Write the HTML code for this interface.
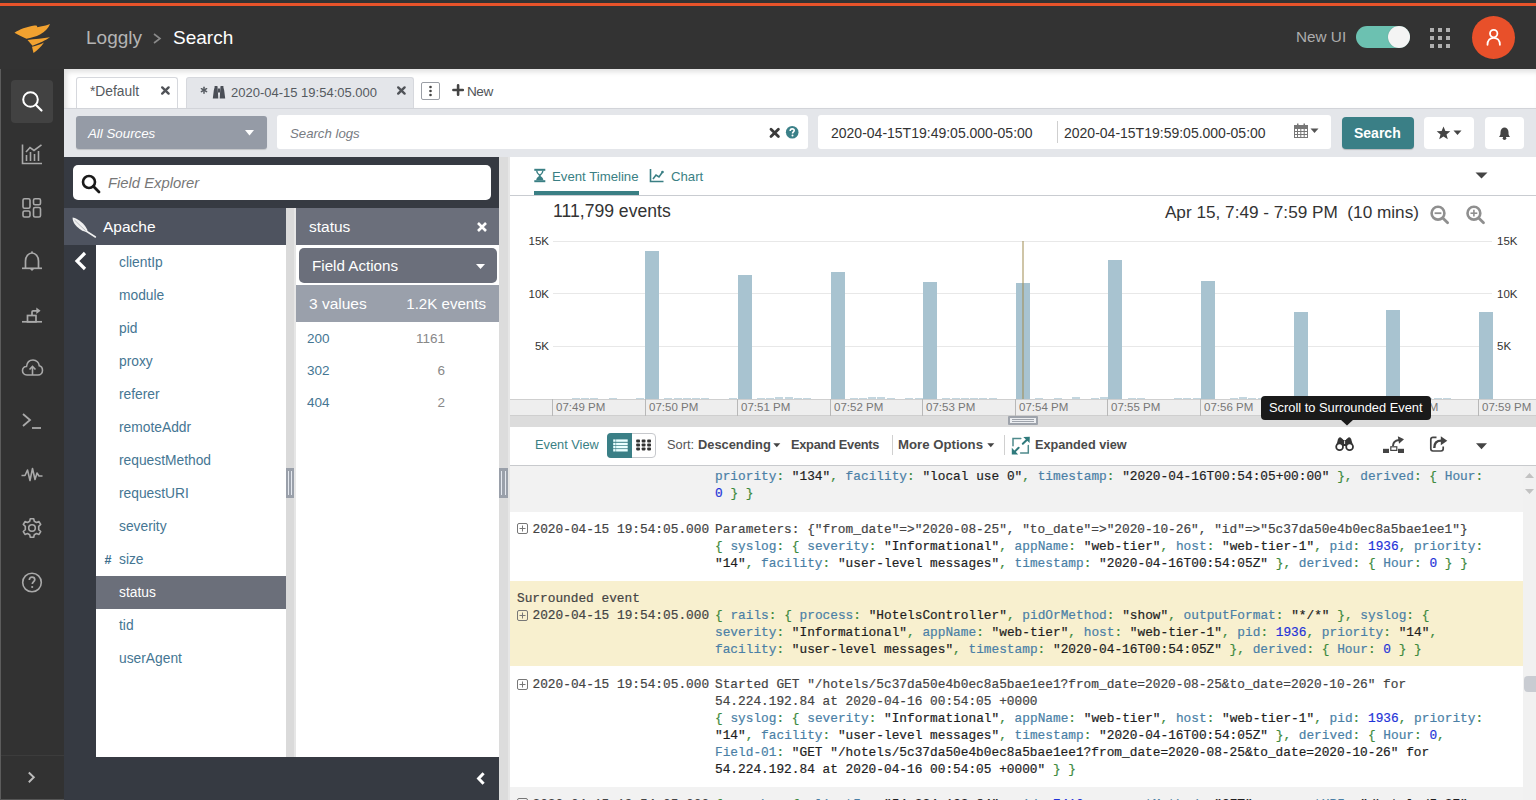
<!DOCTYPE html><html><head><meta charset="utf-8"><style>*{box-sizing:border-box;margin:0;padding:0}
html,body{width:1536px;height:800px;overflow:hidden;background:#e4e6ea;font-family:"Liberation Sans",sans-serif;position:relative}
.a{position:absolute}
.t{position:absolute;line-height:0;white-space:pre;font-family:"Liberation Sans",sans-serif}
.m{font-family:"Liberation Mono",monospace;-webkit-text-stroke:0.2px currentColor}
svg{overflow:visible}
</style></head><body><div class="a" style="left:0px;top:0px;width:1536px;height:69px;background:#333333;"></div>
<div class="a" style="left:0px;top:3px;width:1536px;height:3px;background:#e8532a;"></div>
<svg class="a" style="left:0px;top:0px;" width="64" height="69" viewBox="0 0 64 69"><g fill="#f2a230">
<path d="M14.5,32.8 C19,29.5 27,26.6 34.5,25.5 L36.5,25.6 L37.5,27.2 L40.5,26.6 C44,26 47.5,25 50,24 C48.5,28 45,32 40,34.5 C36,36.5 31,38 26.5,38.8 C22,37 18,34.5 14.5,32.8 Z"/>
<path d="M27.5,40 C35,39.2 43,38.3 50,37.3 C46,40 39,43.5 32.5,45.7 Z"/>
<path d="M32,46.8 C36,46 40,44.5 44,42.5 C41,47 37,50.5 33.5,53 Z"/>
</g></svg>
<div class="t" style="left:86px;top:38.42px;font-size:19px;color:#b4b4b4;font-weight:400;font-style:normal;">Loggly</div>
<svg class="a" style="left:150px;top:30px;" width="14" height="16" viewBox="0 0 14 16"><polyline points="4,4 10,8.5 4,13" fill="none" stroke="#8a8a8a" stroke-width="1.6"/></svg>
<div class="t" style="left:173px;top:38.42px;font-size:19px;color:#ffffff;font-weight:400;font-style:normal;">Search</div>
<div class="t" style="left:1296px;top:37.20px;font-size:15.3px;color:#adadad;font-weight:400;font-style:normal;">New UI</div>
<div class="a" style="left:1356px;top:26px;width:54px;height:22px;background:#6cc1b1;border-radius:11px"></div>
<div class="a" style="left:1388px;top:26px;width:22px;height:22px;background:#f4f4f4;border-radius:11px;box-shadow:0 0 1px rgba(0,0,0,.3)"></div>
<svg class="a" style="left:1430px;top:28px;" width="20" height="20" viewBox="0 0 20 20"><rect x="0" y="0" width="4" height="4" fill="#b0b0b0"/><rect x="8" y="0" width="4" height="4" fill="#b0b0b0"/><rect x="16" y="0" width="4" height="4" fill="#b0b0b0"/><rect x="0" y="8" width="4" height="4" fill="#b0b0b0"/><rect x="8" y="8" width="4" height="4" fill="#b0b0b0"/><rect x="16" y="8" width="4" height="4" fill="#b0b0b0"/><rect x="0" y="16" width="4" height="4" fill="#b0b0b0"/><rect x="8" y="16" width="4" height="4" fill="#b0b0b0"/><rect x="16" y="16" width="4" height="4" fill="#b0b0b0"/></svg>
<div class="a" style="left:1472px;top:16px;width:43px;height:43px;background:#e8502a;border-radius:50%"></div>
<svg class="a" style="left:1472px;top:16px;" width="43" height="43" viewBox="0 0 43 43"><circle cx="21.7" cy="17.6" r="3.7" fill="none" stroke="#fff" stroke-width="1.8"/><path d="M15.5,28.8 C15.5,24.5 18,21.8 21.7,21.8 C25.4,21.8 27.9,24.5 27.9,28.8" fill="none" stroke="#fff" stroke-width="1.8" stroke-linecap="round"/></svg>
<div class="a" style="left:0px;top:69px;width:64px;height:731px;background:#323232;"></div>
<div class="a" style="left:0px;top:69px;width:1px;height:731px;background:#5c5c5c;"></div>
<div class="a" style="left:0px;top:799px;width:64px;height:1px;background:#555555;"></div>
<div class="a" style="left:11px;top:80px;width:42px;height:43px;background:#424242;border-radius:4px"></div>
<svg class="a" style="left:20px;top:89px;" width="24" height="24" viewBox="0 0 24 24"><circle cx="10.5" cy="10.5" r="7.3" fill="none" stroke="#fff" stroke-width="2"/><line x1="16" y1="16" x2="21.5" y2="21.5" stroke="#fff" stroke-width="2.2" stroke-linecap="round"/></svg>
<svg class="a" style="left:20px;top:143px;" width="24" height="24" viewBox="0 0 24 24"><g fill="none" stroke="#a9a9a9" stroke-width="1.6"><polyline points="2.5,1.5 2.5,20.5 22,20.5"/><polyline points="6,9 10,4.5 14,7.5 21.5,1.8"/><line x1="6.5" y1="12" x2="6.5" y2="18"/><line x1="10.5" y1="9" x2="10.5" y2="18"/><line x1="14.5" y1="11" x2="14.5" y2="18"/><line x1="18.5" y1="8" x2="18.5" y2="18"/></g></svg>
<svg class="a" style="left:20px;top:196px;" width="24" height="24" viewBox="0 0 24 24"><g fill="none" stroke="#a9a9a9" stroke-width="1.6"><rect x="3" y="2.8" width="7" height="9.5" rx="1.5"/><rect x="3" y="15" width="7" height="6" rx="1.5"/><rect x="13.5" y="2.8" width="7" height="6" rx="1.5"/><rect x="13.5" y="11.5" width="7" height="9.5" rx="1.5"/></g></svg>
<svg class="a" style="left:20px;top:250px;" width="24" height="24" viewBox="0 0 24 24"><g fill="none" stroke="#a9a9a9" stroke-width="1.7"><path d="M5.5,18 L5.5,11 C5.5,6.5 8.5,3 12,3 C15.5,3 18.5,6.5 18.5,11 L18.5,18"/><line x1="2" y1="18.3" x2="22" y2="18.3"/></g><path d="M10,19 L14,19 L12,21 Z" fill="#a9a9a9"/><circle cx="12" cy="2.3" r="1" fill="#a9a9a9"/></svg>
<svg class="a" style="left:20px;top:304px;" width="24" height="24" viewBox="0 0 24 24"><g fill="none" stroke="#a9a9a9" stroke-width="1.7"><line x1="2" y1="17.8" x2="22" y2="17.8"/><rect x="7.5" y="11.5" width="8.5" height="6.3"/><path d="M12,11.5 L12,8 Q12,6.8 13.2,6.8 L17,6.8"/></g><path d="M16.3,3.6 L20.6,6.8 L16.3,10 Z" fill="#a9a9a9"/></svg>
<svg class="a" style="left:20px;top:356px;" width="24" height="24" viewBox="0 0 24 24"><g fill="none" stroke="#a9a9a9" stroke-width="1.6"><path d="M7,19 C3.8,19 2.5,16.5 2.5,14.5 C2.5,12 4.5,10.3 6.5,10.5 C7,6.5 9.5,4 13,4 C16.5,4 19,6.8 19.3,9.8 C21.5,10.3 22.5,12.3 22.5,14.5 C22.5,17 20.5,19 18,19 Z"/><line x1="12.5" y1="19" x2="12.5" y2="11"/><polyline points="9.5,13.5 12.5,10.5 15.5,13.5"/></g></svg>
<svg class="a" style="left:20px;top:409px;" width="24" height="24" viewBox="0 0 24 24"><g fill="none" stroke="#a9a9a9" stroke-width="1.8"><polyline points="3,5 10,11 3,17"/><line x1="12" y1="19" x2="21" y2="19"/></g></svg>
<svg class="a" style="left:20px;top:463px;" width="24" height="24" viewBox="0 0 24 24"><polyline points="1.5,12.5 5,12.5 7.5,7 10,17.5 12.5,5.5 15,16.5 17,10 19,13 22.5,13" fill="none" stroke="#a9a9a9" stroke-width="1.6" stroke-linejoin="round"/></svg>
<svg class="a" style="left:20px;top:516px;" width="24" height="24" viewBox="0 0 24 24"><g fill="none" stroke="#a9a9a9" stroke-width="1.6"><path d="M10.3,2.7 L13.7,2.7 L14.3,5.3 L16.5,6.5 L19,5.6 L20.7,8.5 L18.7,10.3 L18.7,13.7 L20.7,15.5 L19,18.4 L16.5,17.5 L14.3,18.7 L13.7,21.3 L10.3,21.3 L9.7,18.7 L7.5,17.5 L5,18.4 L3.3,15.5 L5.3,13.7 L5.3,10.3 L3.3,8.5 L5,5.6 L7.5,6.5 L9.7,5.3 Z" stroke-linejoin="round"/><circle cx="12" cy="12" r="3.3"/></g></svg>
<svg class="a" style="left:20px;top:570px;" width="24" height="24" viewBox="0 0 24 24"><circle cx="12" cy="12.5" r="9.3" fill="none" stroke="#a9a9a9" stroke-width="1.6"/><path d="M9.3,10 C9.3,8 10.5,7.2 12,7.2 C13.6,7.2 14.8,8.2 14.8,9.7 C14.8,11.5 12.3,11.8 12.3,14" fill="none" stroke="#a9a9a9" stroke-width="1.7"/><circle cx="12.2" cy="17" r="1.1" fill="#a9a9a9"/></svg>
<div class="a" style="left:1px;top:755px;width:63px;height:1px;background:#3c3c3c;"></div>
<svg class="a" style="left:20px;top:765px;" width="24" height="24" viewBox="0 0 24 24"><polyline points="8.8,7.5 13.8,12.3 8.8,17.2" fill="none" stroke="#bdbdbd" stroke-width="1.9"/></svg>
<div class="a" style="left:64px;top:69px;width:1472px;height:39px;background:#ffffff;box-shadow:inset 3px 3px 5px rgba(0,0,0,.12)"></div>
<div class="a" style="left:76px;top:77px;width:102px;height:31px;background:#ffffff;border:1px solid #d6d8dd;border-bottom:none;border-radius:3px 3px 0 0"></div>
<div class="t" style="left:90px;top:92.22px;font-size:13.8px;color:#555a60;font-weight:400;font-style:normal;">*Default</div>
<svg class="a" style="left:160px;top:85px;" width="12" height="12" viewBox="0 0 12 12"><path d="M2.2,2.4 L8.6,8.6 M8.6,2.4 L2.2,8.6" stroke="#505358" stroke-width="2.4" stroke-linecap="round"/></svg>
<div class="a" style="left:186px;top:77px;width:228px;height:31px;background:#e4e6ea;border:1px solid #d6d8dd;border-bottom:none;border-radius:3px 3px 0 0"></div>
<svg class="a" style="left:200px;top:86px;" width="9" height="9" viewBox="0 0 9 9"><g stroke="#555a60" stroke-width="1.5" stroke-linecap="round"><line x1="4" y1="1.2" x2="4" y2="7.2"/><line x1="1.4" y1="2.7" x2="6.6" y2="5.7"/><line x1="1.4" y1="5.7" x2="6.6" y2="2.7"/></g></svg>
<svg class="a" style="left:212px;top:85px;" width="14" height="14" viewBox="0 0 14 14"><g fill="#4a4e56"><path d="M0.8,13.6 L1.8,5.5 L2.6,2.2 L2.6,1 L5.4,1 L5.6,2.2 L6.3,13.6 Z"/><path d="M13.2,13.6 L12.2,5.5 L11.4,2.2 L11.4,1 L8.6,1 L8.4,2.2 L7.7,13.6 Z"/><rect x="6" y="3.5" width="2" height="4"/></g></svg>
<div class="t" style="left:231px;top:92.50px;font-size:13px;color:#555a60;font-weight:400;font-style:normal;">2020-04-15 19:54:05.000</div>
<svg class="a" style="left:396px;top:85px;" width="12" height="12" viewBox="0 0 12 12"><path d="M2.2,2.4 L8.6,8.6 M8.6,2.4 L2.2,8.6" stroke="#505358" stroke-width="2.4" stroke-linecap="round"/></svg>
<div class="a" style="left:421px;top:82px;width:19px;height:18px;background:#ffffff;border:1px solid #9a9ea5;border-radius:2px"></div>
<svg class="a" style="left:421px;top:82px;" width="19" height="18" viewBox="0 0 19 18"><g fill="#444"><circle cx="9.5" cy="5" r="1.3"/><circle cx="9.5" cy="9" r="1.3"/><circle cx="9.5" cy="13" r="1.3"/></g></svg>
<svg class="a" style="left:452px;top:84px;" width="14" height="14" viewBox="0 0 14 14"><path d="M6.1,1.3 L6.1,10.7 M1.4,6 L10.8,6" stroke="#444" stroke-width="2.6" stroke-linecap="round"/></svg>
<div class="t" style="left:467px;top:91.79px;font-size:13.6px;color:#505458;font-weight:400;font-style:normal;letter-spacing:-0.45px">New</div>
<div class="a" style="left:64px;top:108px;width:1472px;height:49px;background:#e4e6ea;"></div>
<div class="a" style="left:64px;top:108px;width:1472px;height:1px;background:#d2d4d9;"></div>
<div class="a" style="left:76px;top:116px;width:191px;height:33px;background:#959ba6;border-radius:3px;box-shadow:0 1px 1px rgba(0,0,0,.15)"></div>
<div class="t" style="left:88px;top:133.89px;font-size:13.3px;color:#ffffff;font-weight:400;font-style:italic;">All Sources</div>
<svg class="a" style="left:244px;top:129px;" width="12" height="8" viewBox="0 0 12 8"><path d="M1,1 L10,1 L5.5,6.5 Z" fill="#fff"/></svg>
<div class="a" style="left:277px;top:115px;width:531px;height:34px;background:#ffffff;border-radius:3px"></div>
<div class="t" style="left:290px;top:133.93px;font-size:13.2px;color:#777b82;font-weight:400;font-style:italic;">Search logs</div>
<svg class="a" style="left:768px;top:126px;" width="14" height="14" viewBox="0 0 14 14"><path d="M3,3.2 L10.4,10.6 M10.4,3.2 L3,10.6" stroke="#3a3a3a" stroke-width="2.8" stroke-linecap="round"/></svg>
<svg class="a" style="left:784px;top:124px;" width="16" height="16" viewBox="0 0 16 16"><circle cx="8.2" cy="8.3" r="6.3" fill="#3b8088"/><path d="M6.2,7 C6.2,5.6 7,4.9 8.2,4.9 C9.4,4.9 10.2,5.6 10.2,6.6 C10.2,7.9 8.5,8 8.5,9.5" fill="none" stroke="#fff" stroke-width="1.6"/><circle cx="8.5" cy="11.4" r="1" fill="#fff"/></svg>
<div class="a" style="left:818px;top:115px;width:513px;height:34px;background:#ffffff;border-radius:3px"></div>
<div class="t" style="left:831px;top:132.65px;font-size:14px;color:#333333;font-weight:400;font-style:normal;">2020-04-15T19:49:05.000-05:00</div>
<div class="a" style="left:1057px;top:121px;width:1px;height:22px;background:#cfcfcf;"></div>
<div class="t" style="left:1064px;top:132.65px;font-size:14px;color:#333333;font-weight:400;font-style:normal;">2020-04-15T19:59:05.000-05:00</div>
<svg class="a" style="left:1293px;top:123px;" width="16" height="16" viewBox="0 0 16 16"><g fill="none" stroke="#777" stroke-width="1"><rect x="1.5" y="2.5" width="13" height="12"/><line x1="1.5" y1="5.5" x2="14.5" y2="5.5"/><line x1="4.5" y1="5.5" x2="4.5" y2="14.5"/><line x1="7.8" y1="5.5" x2="7.8" y2="14.5"/><line x1="11.2" y1="5.5" x2="11.2" y2="14.5"/><line x1="1.5" y1="8.5" x2="14.5" y2="8.5"/><line x1="1.5" y1="11.5" x2="14.5" y2="11.5"/></g><rect x="1" y="2" width="14" height="3.5" fill="#777"/><rect x="4" y="0.5" width="1.5" height="3" fill="#777"/><rect x="10.5" y="0.5" width="1.5" height="3" fill="#777"/></svg>
<svg class="a" style="left:1310px;top:128px;" width="10" height="6" viewBox="0 0 10 6"><path d="M0.5,0.5 L8.5,0.5 L4.5,5 Z" fill="#555"/></svg>
<div class="a" style="left:1342px;top:117px;width:72px;height:32px;background:#3a7f86;border-radius:4px;box-shadow:0 1px 1px rgba(0,0,0,.2)"></div>
<div class="t" style="left:1354px;top:133.15px;font-size:14px;color:#ffffff;font-weight:700;font-style:normal;">Search</div>
<div class="a" style="left:1424px;top:117px;width:50px;height:32px;background:#ffffff;border-radius:4px"></div>
<svg class="a" style="left:1436px;top:126px;" width="16" height="14" viewBox="0 0 16 14"><path d="M7.5,0.5 L9.4,5 L14.3,5.3 L10.5,8.4 L11.8,13.2 L7.5,10.5 L3.2,13.2 L4.5,8.4 L0.7,5.3 L5.6,5 Z" fill="#444"/></svg>
<svg class="a" style="left:1453px;top:130px;" width="10" height="6" viewBox="0 0 10 6"><path d="M0.5,0.5 L8.5,0.5 L4.5,5 Z" fill="#444"/></svg>
<div class="a" style="left:1485px;top:117px;width:39px;height:32px;background:#ffffff;border-radius:4px"></div>
<svg class="a" style="left:1497px;top:126px;" width="16" height="15" viewBox="0 0 16 15"><path d="M2,11 C3.5,9.5 3.5,8 3.5,6 C3.5,3.3 5.5,1.5 7.5,1.5 C9.5,1.5 11.5,3.3 11.5,6 C11.5,8 11.5,9.5 13,11 Z" fill="#444"/><circle cx="7.5" cy="12.3" r="1.8" fill="#444"/></svg>
<div class="a" style="left:64px;top:157px;width:435px;height:643px;background:#363a42;"></div>
<div class="a" style="left:73px;top:165px;width:418px;height:35px;background:#ffffff;border-radius:5px"></div>
<svg class="a" style="left:81px;top:174px;" width="20" height="20" viewBox="0 0 20 20"><circle cx="8" cy="8" r="6" fill="none" stroke="#1a1a1a" stroke-width="2.6"/><line x1="12.3" y1="12.3" x2="18" y2="18" stroke="#1a1a1a" stroke-width="2.8" stroke-linecap="round"/></svg>
<div class="t" style="left:108px;top:182.87px;font-size:14.8px;color:#777777;font-weight:400;font-style:italic;">Field Explorer</div>
<div class="a" style="left:64px;top:208px;width:222px;height:37px;background:#4e535f;"></div>
<svg class="a" style="left:70px;top:215px;" width="28" height="24" viewBox="0 0 28 24"><path d="M2.6,2.6 C8.5,3.8 14,8.5 17,14.3 L17.6,16.6 L15.5,16.8 C11,15.8 7.2,12.6 4.6,9 C3.2,7 2.6,4.8 2.6,2.6 Z" fill="#f0f0f0"/><path d="M4.5,5 C8.5,9 12,12.5 16,16" fill="none" stroke="#9ea2aa" stroke-width="0.7"/><path d="M16,16 L25.4,22" stroke="#f0f0f0" stroke-width="1.5" stroke-linecap="round"/></svg>
<div class="t" style="left:103px;top:226.93px;font-size:15.5px;color:#ffffff;font-weight:400;font-style:normal;">Apache</div>
<div class="a" style="left:96px;top:245px;width:190px;height:512px;background:#ffffff;"></div>
<svg class="a" style="left:72px;top:250px;" width="18" height="22" viewBox="0 0 18 22"><polyline points="13,3 5,11 13,19" fill="none" stroke="#ffffff" stroke-width="3.2"/></svg>
<div class="t" style="left:119px;top:262.62px;font-size:13.8px;color:#457693;font-weight:400;font-style:normal;">clientIp</div>
<div class="t" style="left:119px;top:295.62px;font-size:13.8px;color:#457693;font-weight:400;font-style:normal;">module</div>
<div class="t" style="left:119px;top:328.62px;font-size:13.8px;color:#457693;font-weight:400;font-style:normal;">pid</div>
<div class="t" style="left:119px;top:361.62px;font-size:13.8px;color:#457693;font-weight:400;font-style:normal;">proxy</div>
<div class="t" style="left:119px;top:394.62px;font-size:13.8px;color:#457693;font-weight:400;font-style:normal;">referer</div>
<div class="t" style="left:119px;top:427.62px;font-size:13.8px;color:#457693;font-weight:400;font-style:normal;">remoteAddr</div>
<div class="t" style="left:119px;top:460.62px;font-size:13.8px;color:#457693;font-weight:400;font-style:normal;">requestMethod</div>
<div class="t" style="left:119px;top:493.62px;font-size:13.8px;color:#457693;font-weight:400;font-style:normal;">requestURI</div>
<div class="t" style="left:119px;top:526.62px;font-size:13.8px;color:#457693;font-weight:400;font-style:normal;">severity</div>
<div class="t" style="left:119px;top:559.62px;font-size:13.8px;color:#457693;font-weight:400;font-style:normal;">size</div>
<div class="t" style="left:104.5px;top:560.07px;font-size:12.5px;color:#3d6e8c;font-weight:700;font-style:normal;">#</div>
<div class="a" style="left:96px;top:576px;width:190px;height:33px;background:#6b6f7a;"></div>
<div class="t" style="left:119px;top:592.62px;font-size:13.8px;color:#ffffff;font-weight:400;font-style:normal;">status</div>
<div class="t" style="left:119px;top:625.62px;font-size:13.8px;color:#457693;font-weight:400;font-style:normal;">tid</div>
<div class="t" style="left:119px;top:658.62px;font-size:13.8px;color:#457693;font-weight:400;font-style:normal;">userAgent</div>
<div class="a" style="left:286px;top:208px;width:10px;height:549px;background:#dadada;"></div>
<div class="a" style="left:294px;top:208px;width:3px;height:549px;background:#e6e6e6;"></div>
<div class="a" style="left:286px;top:468px;width:8px;height:30px;background:#9aa0aa;"></div>
<div class="a" style="left:288px;top:471px;width:1.3px;height:24px;background:#e4e8ef;"></div>
<div class="a" style="left:291.2px;top:471px;width:1.3px;height:24px;background:#e4e8ef;"></div>
<div class="a" style="left:296px;top:208px;width:203px;height:549px;background:#ffffff;"></div>
<div class="a" style="left:296px;top:208px;width:203px;height:37px;background:#6b6f7b;"></div>
<div class="t" style="left:309px;top:227.43px;font-size:15.5px;color:#ffffff;font-weight:400;font-style:normal;">status</div>
<svg class="a" style="left:475px;top:220px;" width="14" height="14" viewBox="0 0 14 14"><path d="M3,3 L11,11 M11,3 L3,11" stroke="#fff" stroke-width="2.6"/></svg>
<div class="a" style="left:299px;top:248px;width:198px;height:35px;background:#6b6f7b;border-radius:5px"></div>
<div class="t" style="left:312px;top:265.73px;font-size:15.2px;color:#ffffff;font-weight:400;font-style:normal;">Field Actions</div>
<svg class="a" style="left:475px;top:263px;" width="12" height="8" viewBox="0 0 12 8"><path d="M1,1 L10,1 L5.5,6 Z" fill="#fff"/></svg>
<div class="a" style="left:296px;top:285px;width:203px;height:37px;background:#9aa0ab;"></div>
<div class="t" style="left:309px;top:304.13px;font-size:15.5px;color:#ffffff;font-weight:400;font-style:normal;">3 values</div>
<div class="t" style="left:486px;top:304.27px;font-size:15.1px;color:#ffffff;font-weight:400;font-style:normal;transform:translateX(-100%)">1.2K events</div>
<div class="t" style="left:307px;top:338.82px;font-size:13.5px;color:#457693;font-weight:400;font-style:normal;">200</div>
<div class="t" style="left:445px;top:338.82px;font-size:13.5px;color:#888888;font-weight:400;font-style:normal;transform:translateX(-100%)">1161</div>
<div class="t" style="left:307px;top:370.82px;font-size:13.5px;color:#457693;font-weight:400;font-style:normal;">302</div>
<div class="t" style="left:445px;top:370.82px;font-size:13.5px;color:#888888;font-weight:400;font-style:normal;transform:translateX(-100%)">6</div>
<div class="t" style="left:307px;top:402.82px;font-size:13.5px;color:#457693;font-weight:400;font-style:normal;">404</div>
<div class="t" style="left:445px;top:402.82px;font-size:13.5px;color:#888888;font-weight:400;font-style:normal;transform:translateX(-100%)">2</div>
<div class="a" style="left:499px;top:157px;width:11px;height:643px;background:#dcdcdc;"></div>
<div class="a" style="left:508px;top:157px;width:2px;height:643px;background:#e6e6e6;"></div>
<div class="a" style="left:499px;top:468px;width:9px;height:30px;background:#9aa0aa;"></div>
<div class="a" style="left:501.2px;top:471px;width:1.3px;height:24px;background:#e4e8ef;"></div>
<div class="a" style="left:504.6px;top:471px;width:1.3px;height:24px;background:#e4e8ef;"></div>
<div class="a" style="left:64px;top:757px;width:435px;height:43px;background:#363a42;"></div>
<svg class="a" style="left:470px;top:768px;" width="20" height="20" viewBox="0 0 20 20"><polyline points="13.6,5.2 8.6,10.5 13.6,15.8" fill="none" stroke="#ffffff" stroke-width="3"/></svg>
<div class="a" style="left:510px;top:157px;width:1026px;height:270px;background:#ffffff;"></div>
<svg class="a" style="left:534px;top:168px;" width="14" height="15" viewBox="0 0 14 15"><g fill="#3a7f84"><rect x="0.3" y="0.8" width="11" height="2"/><rect x="0.3" y="12.2" width="11" height="2"/><path d="M2.2,12.2 C2.2,10 4,8.8 5.8,7.5 C7.6,8.8 9.4,10 9.4,12.2 Z"/></g><path d="M2.6,2.6 C2.6,5 4.3,6.3 5.8,7.5 C7.3,6.3 9,5 9,2.6" fill="none" stroke="#3a7f84" stroke-width="1.4"/></svg>
<div class="t" style="left:552px;top:176.73px;font-size:13.2px;color:#3a7f84;font-weight:400;font-style:normal;">Event Timeline</div>
<svg class="a" style="left:649px;top:168px;" width="16" height="15" viewBox="0 0 16 15"><g fill="none" stroke="#3a7f84" stroke-width="1.6"><polyline points="1.5,1 1.5,13.5 14.5,13.5"/><polyline points="4,11 7,7 10,9 13.5,4"/></g><circle cx="13.5" cy="4" r="1.3" fill="#3a7f84"/></svg>
<div class="t" style="left:671px;top:176.73px;font-size:13.2px;color:#3a7f84;font-weight:400;font-style:normal;">Chart</div>
<div class="a" style="left:534px;top:191px;width:105px;height:4px;background:#3a7f84;"></div>
<div class="a" style="left:510px;top:195px;width:1026px;height:1px;background:#c9ccd1;"></div>
<svg class="a" style="left:1475px;top:172px;" width="14" height="8" viewBox="0 0 14 8"><path d="M0.5,0.5 L12.5,0.5 L6.5,6.5 Z" fill="#444"/></svg>
<div class="t" style="left:553px;top:211.40px;font-size:17.6px;color:#333333;font-weight:400;font-style:normal;">111,799 events</div>
<div class="t" style="left:1419px;top:211.54px;font-size:17.2px;color:#333333;font-weight:400;font-style:normal;transform:translateX(-100%)">Apr 15, 7:49 - 7:59 PM  (10 mins)</div>
<svg class="a" style="left:1428px;top:203px;" width="22" height="22" viewBox="0 0 22 22"><circle cx="10" cy="10.2" r="6.4" fill="none" stroke="#8f8f8f" stroke-width="2.6"/><line x1="14.8" y1="15" x2="19.6" y2="19.8" stroke="#8f8f8f" stroke-width="2.8" stroke-linecap="round"/><line x1="6.6" y1="10.2" x2="13.4" y2="10.2" stroke="#8f8f8f" stroke-width="1.8"/></svg>
<svg class="a" style="left:1464px;top:203px;" width="22" height="22" viewBox="0 0 22 22"><circle cx="9.9" cy="10.2" r="6.4" fill="none" stroke="#8f8f8f" stroke-width="2.6"/><line x1="14.7" y1="15" x2="19.5" y2="19.8" stroke="#8f8f8f" stroke-width="2.8" stroke-linecap="round"/><line x1="6.5" y1="10.2" x2="13.3" y2="10.2" stroke="#8f8f8f" stroke-width="1.6"/><line x1="9.9" y1="6.8" x2="9.9" y2="13.6" stroke="#8f8f8f" stroke-width="1.6"/></svg>
<div class="a" style="left:553px;top:241px;width:939px;height:1px;background:#e8e8e8;"></div>
<div class="t" style="left:549px;top:241.02px;font-size:11.5px;color:#333333;font-weight:400;font-style:normal;transform:translateX(-100%)">15K</div>
<div class="t" style="left:1497px;top:241.02px;font-size:11.5px;color:#333333;font-weight:400;font-style:normal;">15K</div>
<div class="a" style="left:553px;top:293px;width:939px;height:1px;background:#e8e8e8;"></div>
<div class="t" style="left:549px;top:293.52px;font-size:11.5px;color:#333333;font-weight:400;font-style:normal;transform:translateX(-100%)">10K</div>
<div class="t" style="left:1497px;top:293.52px;font-size:11.5px;color:#333333;font-weight:400;font-style:normal;">10K</div>
<div class="a" style="left:553px;top:346px;width:939px;height:1px;background:#e8e8e8;"></div>
<div class="t" style="left:549px;top:346.02px;font-size:11.5px;color:#333333;font-weight:400;font-style:normal;transform:translateX(-100%)">5K</div>
<div class="t" style="left:1497px;top:346.02px;font-size:11.5px;color:#333333;font-weight:400;font-style:normal;">5K</div>
<div class="a" style="left:645px;top:251px;width:14px;height:148px;background:#a8c3d0;"></div>
<div class="a" style="left:738px;top:275px;width:14px;height:124px;background:#a8c3d0;"></div>
<div class="a" style="left:831px;top:272px;width:14px;height:127px;background:#a8c3d0;"></div>
<div class="a" style="left:923px;top:282px;width:14px;height:117px;background:#a8c3d0;"></div>
<div class="a" style="left:1016px;top:283px;width:14px;height:116px;background:#a8c3d0;"></div>
<div class="a" style="left:1108px;top:260px;width:14px;height:139px;background:#a8c3d0;"></div>
<div class="a" style="left:1201px;top:281px;width:14px;height:118px;background:#a8c3d0;"></div>
<div class="a" style="left:1294px;top:312px;width:14px;height:87px;background:#a8c3d0;"></div>
<div class="a" style="left:1386px;top:310px;width:14px;height:89px;background:#a8c3d0;"></div>
<div class="a" style="left:1479px;top:312px;width:14px;height:87px;background:#a8c3d0;"></div>
<div class="a" style="left:572px;top:398px;width:8px;height:1px;background:#c3d6df;"></div>
<div class="a" style="left:581px;top:398px;width:8px;height:1px;background:#c3d6df;"></div>
<div class="a" style="left:590px;top:398px;width:8px;height:1px;background:#c3d6df;"></div>
<div class="a" style="left:609px;top:398px;width:8px;height:1px;background:#c3d6df;"></div>
<div class="a" style="left:636px;top:398px;width:8px;height:1px;background:#c3d6df;"></div>
<div class="a" style="left:664px;top:398px;width:8px;height:1px;background:#c3d6df;"></div>
<div class="a" style="left:674px;top:398px;width:8px;height:1px;background:#c3d6df;"></div>
<div class="a" style="left:683px;top:398px;width:8px;height:1px;background:#c3d6df;"></div>
<div class="a" style="left:692px;top:398px;width:8px;height:1px;background:#c3d6df;"></div>
<div class="a" style="left:701px;top:398px;width:8px;height:1px;background:#c3d6df;"></div>
<div class="a" style="left:729px;top:398px;width:8px;height:1px;background:#c3d6df;"></div>
<div class="a" style="left:757px;top:398px;width:8px;height:1px;background:#c3d6df;"></div>
<div class="a" style="left:766px;top:398px;width:8px;height:1px;background:#c3d6df;"></div>
<div class="a" style="left:775px;top:397px;width:8px;height:2px;background:#c3d6df;"></div>
<div class="a" style="left:785px;top:397px;width:8px;height:2px;background:#c3d6df;"></div>
<div class="a" style="left:794px;top:398px;width:8px;height:1px;background:#c3d6df;"></div>
<div class="a" style="left:803px;top:398px;width:8px;height:1px;background:#c3d6df;"></div>
<div class="a" style="left:850px;top:398px;width:8px;height:1px;background:#c3d6df;"></div>
<div class="a" style="left:859px;top:398px;width:8px;height:1px;background:#c3d6df;"></div>
<div class="a" style="left:868px;top:397px;width:8px;height:2px;background:#c3d6df;"></div>
<div class="a" style="left:877px;top:397px;width:8px;height:2px;background:#c3d6df;"></div>
<div class="a" style="left:887px;top:398px;width:8px;height:1px;background:#c3d6df;"></div>
<div class="a" style="left:905px;top:398px;width:8px;height:1px;background:#c3d6df;"></div>
<div class="a" style="left:915px;top:398px;width:8px;height:1px;background:#c3d6df;"></div>
<div class="a" style="left:942px;top:398px;width:8px;height:1px;background:#c3d6df;"></div>
<div class="a" style="left:952px;top:398px;width:8px;height:1px;background:#c3d6df;"></div>
<div class="a" style="left:961px;top:398px;width:8px;height:1px;background:#c3d6df;"></div>
<div class="a" style="left:970px;top:398px;width:8px;height:1px;background:#c3d6df;"></div>
<div class="a" style="left:979px;top:398px;width:8px;height:1px;background:#c3d6df;"></div>
<div class="a" style="left:989px;top:398px;width:8px;height:1px;background:#c3d6df;"></div>
<div class="a" style="left:1035px;top:398px;width:8px;height:1px;background:#c3d6df;"></div>
<div class="a" style="left:1054px;top:398px;width:8px;height:1px;background:#c3d6df;"></div>
<div class="a" style="left:1072px;top:397px;width:8px;height:2px;background:#c3d6df;"></div>
<div class="a" style="left:1091px;top:398px;width:8px;height:1px;background:#c3d6df;"></div>
<div class="a" style="left:1100px;top:397px;width:8px;height:2px;background:#c3d6df;"></div>
<div class="a" style="left:1128px;top:398px;width:8px;height:1px;background:#c3d6df;"></div>
<div class="a" style="left:1137px;top:398px;width:8px;height:1px;background:#c3d6df;"></div>
<div class="a" style="left:1174px;top:398px;width:8px;height:1px;background:#c3d6df;"></div>
<div class="a" style="left:1183px;top:398px;width:8px;height:1px;background:#c3d6df;"></div>
<div class="a" style="left:1193px;top:398px;width:8px;height:1px;background:#c3d6df;"></div>
<div class="a" style="left:1230px;top:398px;width:8px;height:1px;background:#c3d6df;"></div>
<div class="a" style="left:1239px;top:397px;width:8px;height:2px;background:#c3d6df;"></div>
<div class="a" style="left:1248px;top:398px;width:8px;height:1px;background:#c3d6df;"></div>
<div class="a" style="left:1258px;top:398px;width:8px;height:1px;background:#c3d6df;"></div>
<div class="a" style="left:1267px;top:398px;width:8px;height:1px;background:#c3d6df;"></div>
<div class="a" style="left:1285px;top:398px;width:8px;height:1px;background:#c3d6df;"></div>
<div class="a" style="left:1313px;top:398px;width:8px;height:1px;background:#c3d6df;"></div>
<div class="a" style="left:1322px;top:397px;width:8px;height:2px;background:#c3d6df;"></div>
<div class="a" style="left:1350px;top:397px;width:8px;height:2px;background:#c3d6df;"></div>
<div class="a" style="left:1369px;top:398px;width:8px;height:1px;background:#c3d6df;"></div>
<div class="a" style="left:1415px;top:398px;width:8px;height:1px;background:#c3d6df;"></div>
<div class="a" style="left:1424px;top:398px;width:8px;height:1px;background:#c3d6df;"></div>
<div class="a" style="left:1434px;top:398px;width:8px;height:1px;background:#c3d6df;"></div>
<div class="a" style="left:1443px;top:398px;width:8px;height:1px;background:#c3d6df;"></div>
<div class="a" style="left:1022.2px;top:241px;width:1.6px;height:158px;background:rgba(160,140,80,0.5);"></div>
<div class="a" style="left:510px;top:399px;width:1026px;height:17px;background:#eeeeee;border-top:1px solid #cfcfcf;border-bottom:1px solid #cfcfcf"></div>
<div class="a" style="left:552px;top:399px;width:1px;height:17px;background:#b8b8b8;"></div>
<div class="t" style="left:556px;top:407.32px;font-size:11.5px;color:#777777;font-weight:400;font-style:normal;">07:49 PM</div>
<div class="a" style="left:645px;top:399px;width:1px;height:17px;background:#b8b8b8;"></div>
<div class="t" style="left:649px;top:407.32px;font-size:11.5px;color:#777777;font-weight:400;font-style:normal;">07:50 PM</div>
<div class="a" style="left:737px;top:399px;width:1px;height:17px;background:#b8b8b8;"></div>
<div class="t" style="left:741px;top:407.32px;font-size:11.5px;color:#777777;font-weight:400;font-style:normal;">07:51 PM</div>
<div class="a" style="left:830px;top:399px;width:1px;height:17px;background:#b8b8b8;"></div>
<div class="t" style="left:834px;top:407.32px;font-size:11.5px;color:#777777;font-weight:400;font-style:normal;">07:52 PM</div>
<div class="a" style="left:922px;top:399px;width:1px;height:17px;background:#b8b8b8;"></div>
<div class="t" style="left:926px;top:407.32px;font-size:11.5px;color:#777777;font-weight:400;font-style:normal;">07:53 PM</div>
<div class="a" style="left:1015px;top:399px;width:1px;height:17px;background:#b8b8b8;"></div>
<div class="t" style="left:1019px;top:407.32px;font-size:11.5px;color:#777777;font-weight:400;font-style:normal;">07:54 PM</div>
<div class="a" style="left:1107px;top:399px;width:1px;height:17px;background:#b8b8b8;"></div>
<div class="t" style="left:1111px;top:407.32px;font-size:11.5px;color:#777777;font-weight:400;font-style:normal;">07:55 PM</div>
<div class="a" style="left:1200px;top:399px;width:1px;height:17px;background:#b8b8b8;"></div>
<div class="t" style="left:1204px;top:407.32px;font-size:11.5px;color:#777777;font-weight:400;font-style:normal;">07:56 PM</div>
<div class="a" style="left:1292px;top:399px;width:1px;height:17px;background:#b8b8b8;"></div>
<div class="t" style="left:1296px;top:407.32px;font-size:11.5px;color:#777777;font-weight:400;font-style:normal;">07:57 PM</div>
<div class="a" style="left:1385px;top:399px;width:1px;height:17px;background:#b8b8b8;"></div>
<div class="t" style="left:1389px;top:407.32px;font-size:11.5px;color:#777777;font-weight:400;font-style:normal;">07:58 PM</div>
<div class="a" style="left:1478px;top:399px;width:1px;height:17px;background:#b8b8b8;"></div>
<div class="t" style="left:1482px;top:407.32px;font-size:11.5px;color:#777777;font-weight:400;font-style:normal;">07:59 PM</div>
<div class="a" style="left:510px;top:416px;width:1026px;height:11px;background:#dcdcdc;"></div>
<div class="a" style="left:1008px;top:416px;width:30px;height:9px;background:#eceef1;border:2px solid #9ea3ab;border-radius:1px"></div>
<div class="a" style="left:1012px;top:419px;width:22px;height:1px;background:#9ea3ab;"></div>
<div class="a" style="left:1012px;top:421px;width:22px;height:1px;background:#9ea3ab;"></div>
<div class="a" style="left:510px;top:427px;width:1026px;height:39px;background:#ffffff;"></div>
<div class="a" style="left:510px;top:465px;width:1026px;height:1px;background:#c8cacd;"></div>
<div class="t" style="left:535px;top:445.36px;font-size:12.8px;color:#3a7f84;font-weight:400;font-style:normal;">Event View</div>
<div class="a" style="left:607px;top:433px;width:49px;height:25px;background:#ffffff;border:1px solid #c6c8cc;border-radius:4px"></div>
<div class="a" style="left:607px;top:433px;width:25px;height:25px;background:#3a7f86;border-radius:4px 0 0 4px"></div>
<svg class="a" style="left:607px;top:433px;" width="25" height="25" viewBox="0 0 25 25"><g fill="#eaffff"><rect x="6.2" y="6.4" width="2.4" height="2.4"/><rect x="9.1" y="6.4" width="11.6" height="2.4"/><rect x="6.2" y="9.8" width="2.4" height="2.4"/><rect x="9.1" y="9.8" width="11.6" height="2.4"/><rect x="6.2" y="12.9" width="2.4" height="2.4"/><rect x="9.1" y="12.9" width="11.6" height="2.4"/><rect x="6.2" y="16.1" width="2.4" height="2.4"/><rect x="9.1" y="16.1" width="11.6" height="2.4"/></g></svg>
<svg class="a" style="left:632px;top:433px;" width="24" height="25" viewBox="0 0 24 25"><g fill="#333"><rect x="4.2" y="6.6" width="3.8" height="3" rx="0.8"/><rect x="9.7" y="6.6" width="3.8" height="3" rx="0.8"/><rect x="15.2" y="6.6" width="3.8" height="3" rx="0.8"/><rect x="4.2" y="10.5" width="3.8" height="3" rx="0.8"/><rect x="9.7" y="10.5" width="3.8" height="3" rx="0.8"/><rect x="15.2" y="10.5" width="3.8" height="3" rx="0.8"/><rect x="4.2" y="14.4" width="3.8" height="3" rx="0.8"/><rect x="9.7" y="14.4" width="3.8" height="3" rx="0.8"/><rect x="15.2" y="14.4" width="3.8" height="3" rx="0.8"/></g></svg>
<div class="t" style="left:667px;top:445.36px;font-size:12.8px;color:#555555;font-weight:400;font-style:normal;">Sort:</div>
<div class="t" style="left:698px;top:445.35px;font-size:12.85px;color:#4a4a4a;font-weight:700;font-style:normal;">Descending</div>
<svg class="a" style="left:773px;top:442.5px;" width="9" height="6" viewBox="0 0 9 6"><path d="M0.3,0.3 L7.3,0.3 L3.8,4.3 Z" fill="#444"/></svg>
<div class="t" style="left:791px;top:445.36px;font-size:12.8px;color:#4a4a4a;font-weight:700;font-style:normal;letter-spacing:-0.28px">Expand Events</div>
<div class="a" style="left:892px;top:435px;width:1px;height:20px;background:#d0d0d0;"></div>
<div class="t" style="left:898px;top:445.23px;font-size:13.2px;color:#4a4a4a;font-weight:700;font-style:normal;">More Options</div>
<svg class="a" style="left:986.5px;top:442.5px;" width="9" height="6" viewBox="0 0 9 6"><path d="M0.3,0.3 L7.3,0.3 L3.8,4.3 Z" fill="#444"/></svg>
<div class="a" style="left:1004px;top:435px;width:1px;height:20px;background:#d0d0d0;"></div>
<svg class="a" style="left:1005px;top:430px;" width="30" height="30" viewBox="0 0 30 30"><g fill="none" stroke-linecap="round"><polyline points="8,15.8 8,8.4 15.8,8.4" stroke="#4f8a8c" stroke-width="1.5"/><polyline points="23.3,15.4 23.3,22.9 15.6,22.9" stroke="#4f8a8c" stroke-width="1.5"/><line x1="17.8" y1="13.8" x2="22.5" y2="9.2" stroke="#2f7a7c" stroke-width="2"/><line x1="13.6" y1="17.8" x2="9" y2="22.4" stroke="#2f7a7c" stroke-width="2"/></g><path d="M18.3,7 L24.8,6.8 L24.6,13 Z M6.8,17.8 L6.8,24.5 L13.2,24.4 Z" fill="#2f7a7c"/></svg>
<div class="t" style="left:1035px;top:445.40px;font-size:12.7px;color:#4a4a4a;font-weight:700;font-style:normal;">Expanded view</div>
<svg class="a" style="left:1335px;top:436px;" width="20" height="16" viewBox="0 0 20 16"><g fill="#333"><path d="M1.2,10 L3,3 Q4.3,0.6 5.8,1.6 L8.2,3.5 L8.4,10 Z"/><path d="M18,10 L16.2,3 Q14.9,0.6 13.4,1.6 L11,3.5 L10.8,10 Z"/><rect x="8" y="4" width="3.2" height="6"/></g><line x1="9.6" y1="4.5" x2="9.6" y2="8" stroke="#fff" stroke-width="0.9"/><circle cx="4.6" cy="10.8" r="3.4" fill="#fff" stroke="#333" stroke-width="1.8"/><circle cx="14.6" cy="10.8" r="3.4" fill="#fff" stroke="#333" stroke-width="1.8"/></svg>
<svg class="a" style="left:1382px;top:435px;" width="24" height="20" viewBox="0 0 24 20"><g fill="#444"><rect x="1" y="13.8" width="6" height="4.2"/><rect x="16" y="13.8" width="6" height="4.2"/></g><rect x="8.8" y="11.8" width="6" height="3.6" fill="none" stroke="#444" stroke-width="1.2"/><path d="M11,11 C11,7.5 13,5.5 17,5" fill="none" stroke="#444" stroke-width="2"/><path d="M15.8,1.2 L22,4.2 L17,8.8 Z" fill="#444"/></svg>
<svg class="a" style="left:1428px;top:435px;" width="22" height="18" viewBox="0 0 22 18"><path d="M8.5,2.3 L5,2.3 Q2.8,2.3 2.8,4.5 L2.8,13.8 Q2.8,16 5,16 L13,16 Q15.2,16 15.2,13.8 L15.2,11.5" fill="none" stroke="#444" stroke-width="1.7"/><path d="M6.3,13 C6.3,8 8.5,5.6 13.5,5.6" fill="none" stroke="#444" stroke-width="2.4"/><path d="M12.8,1.2 L19.3,5.7 L12.8,10.2 Z" fill="#444"/></svg>
<svg class="a" style="left:1476px;top:442.5px;" width="14" height="8" viewBox="0 0 14 8"><path d="M0,0.3 L11,0.3 L5.5,6.3 Z" fill="#444"/></svg>
<div class="a" style="left:510px;top:466px;width:1013px;height:334px;overflow:hidden">
<div class="a" style="left:0px;top:0px;width:1013px;height:46px;background:#f2f2f2;"></div>
<div class="t m" style="left:205px;top:-6.41px;font-size:12.8px"><span style="color:#1e1e1e">&quot;local0&quot;</span><span style="color:#3d8a3d">,</span><span style="color:#1e1e1e"> </span><span style="color:#4a7fa6">appName</span><span style="color:#3d8a3d">:</span><span style="color:#1e1e1e"> </span><span style="color:#1e1e1e">&quot;web-tier&quot;</span><span style="color:#3d8a3d">,</span><span style="color:#1e1e1e"> </span><span style="color:#4a7fa6">host</span><span style="color:#3d8a3d">:</span><span style="color:#1e1e1e"> </span><span style="color:#1e1e1e">&quot;web-tier-1&quot;</span><span style="color:#3d8a3d">,</span><span style="color:#1e1e1e"> </span><span style="color:#4a7fa6">pid</span><span style="color:#3d8a3d">:</span><span style="color:#1e1e1e"> </span><span style="color:#1f33d8">1936</span><span style="color:#3d8a3d">,</span><span style="color:#1e1e1e"> </span><span style="color:#4a7fa6">severity</span><span style="color:#3d8a3d">:</span><span style="color:#1e1e1e"> </span><span style="color:#1e1e1e">&quot;Notice&quot;</span><span style="color:#3d8a3d">,</span><span style="color:#1e1e1e"> </span><span style="color:#4a7fa6">appName</span><span style="color:#3d8a3d">:</span><span style="color:#1e1e1e"> </span><span style="color:#1e1e1e">&quot;apache&quot;</span><span style="color:#3d8a3d">,</span></div>
<div class="t m" style="left:205px;top:10.59px;font-size:12.8px"><span style="color:#4a7fa6">priority</span><span style="color:#3d8a3d">:</span><span style="color:#1e1e1e"> </span><span style="color:#1e1e1e">&quot;134&quot;</span><span style="color:#3d8a3d">,</span><span style="color:#1e1e1e"> </span><span style="color:#4a7fa6">facility</span><span style="color:#3d8a3d">:</span><span style="color:#1e1e1e"> </span><span style="color:#1e1e1e">&quot;local use 0&quot;</span><span style="color:#3d8a3d">,</span><span style="color:#1e1e1e"> </span><span style="color:#4a7fa6">timestamp</span><span style="color:#3d8a3d">:</span><span style="color:#1e1e1e"> </span><span style="color:#1e1e1e">&quot;2020-04-16T00:54:05+00:00&quot;</span><span style="color:#1e1e1e"> </span><span style="color:#3d8a3d">}</span><span style="color:#3d8a3d">,</span><span style="color:#1e1e1e"> </span><span style="color:#4a7fa6">derived</span><span style="color:#3d8a3d">:</span><span style="color:#1e1e1e"> </span><span style="color:#3d8a3d">{</span><span style="color:#1e1e1e"> </span><span style="color:#4a7fa6">Hour</span><span style="color:#3d8a3d">:</span></div>
<div class="t m" style="left:205px;top:27.59px;font-size:12.8px"><span style="color:#1f33d8">0</span><span style="color:#1e1e1e"> </span><span style="color:#3d8a3d">}</span><span style="color:#1e1e1e"> </span><span style="color:#3d8a3d">}</span></div>
<div class="a" style="left:0px;top:46px;width:1013px;height:69px;background:#ffffff;"></div>
<svg class="a" style="left:7px;top:57px" width="11" height="11" viewBox="0 0 11 11"><rect x="0.5" y="0.5" width="10" height="10" rx="1.5" fill="none" stroke="#777" stroke-width="1"/><path d="M2.5,5.5 L8.5,5.5 M5.5,2.5 L5.5,8.5" stroke="#777" stroke-width="1"/></svg>
<div class="t m" style="left:22.5px;top:63.59px;font-size:12.8px"><span style="color:#444444">2020-04-15 19:54:05.000</span></div>
<div class="t m" style="left:205px;top:63.59px;font-size:12.8px"><span style="color:#444444">Parameters: {&quot;from_date&quot;=&gt;&quot;2020-08-25&quot;, &quot;to_date&quot;=&gt;&quot;2020-10-26&quot;, &quot;id&quot;=&gt;&quot;5c37da50e4b0ec8a5bae1ee1&quot;}</span></div>
<div class="t m" style="left:205px;top:80.59px;font-size:12.8px"><span style="color:#3d8a3d">{</span><span style="color:#1e1e1e"> </span><span style="color:#4a7fa6">syslog</span><span style="color:#3d8a3d">:</span><span style="color:#1e1e1e"> </span><span style="color:#3d8a3d">{</span><span style="color:#1e1e1e"> </span><span style="color:#4a7fa6">severity</span><span style="color:#3d8a3d">:</span><span style="color:#1e1e1e"> </span><span style="color:#1e1e1e">&quot;Informational&quot;</span><span style="color:#3d8a3d">,</span><span style="color:#1e1e1e"> </span><span style="color:#4a7fa6">appName</span><span style="color:#3d8a3d">:</span><span style="color:#1e1e1e"> </span><span style="color:#1e1e1e">&quot;web-tier&quot;</span><span style="color:#3d8a3d">,</span><span style="color:#1e1e1e"> </span><span style="color:#4a7fa6">host</span><span style="color:#3d8a3d">:</span><span style="color:#1e1e1e"> </span><span style="color:#1e1e1e">&quot;web-tier-1&quot;</span><span style="color:#3d8a3d">,</span><span style="color:#1e1e1e"> </span><span style="color:#4a7fa6">pid</span><span style="color:#3d8a3d">:</span><span style="color:#1e1e1e"> </span><span style="color:#1f33d8">1936</span><span style="color:#3d8a3d">,</span><span style="color:#1e1e1e"> </span><span style="color:#4a7fa6">priority</span><span style="color:#3d8a3d">:</span></div>
<div class="t m" style="left:205px;top:97.59px;font-size:12.8px"><span style="color:#1e1e1e">&quot;14&quot;</span><span style="color:#3d8a3d">,</span><span style="color:#1e1e1e"> </span><span style="color:#4a7fa6">facility</span><span style="color:#3d8a3d">:</span><span style="color:#1e1e1e"> </span><span style="color:#1e1e1e">&quot;user-level messages&quot;</span><span style="color:#3d8a3d">,</span><span style="color:#1e1e1e"> </span><span style="color:#4a7fa6">timestamp</span><span style="color:#3d8a3d">:</span><span style="color:#1e1e1e"> </span><span style="color:#1e1e1e">&quot;2020-04-16T00:54:05Z&quot;</span><span style="color:#1e1e1e"> </span><span style="color:#3d8a3d">}</span><span style="color:#3d8a3d">,</span><span style="color:#1e1e1e"> </span><span style="color:#4a7fa6">derived</span><span style="color:#3d8a3d">:</span><span style="color:#1e1e1e"> </span><span style="color:#3d8a3d">{</span><span style="color:#1e1e1e"> </span><span style="color:#4a7fa6">Hour</span><span style="color:#3d8a3d">:</span><span style="color:#1e1e1e"> </span><span style="color:#1f33d8">0</span><span style="color:#1e1e1e"> </span><span style="color:#3d8a3d">}</span><span style="color:#1e1e1e"> </span><span style="color:#3d8a3d">}</span></div>
<div class="a" style="left:0px;top:115px;width:1013px;height:85px;background:#f8f0cf;"></div>
<div class="t m" style="left:7px;top:133.09px;font-size:12.8px"><span style="color:#444444">Surrounded event</span></div>
<svg class="a" style="left:7px;top:143.5px" width="11" height="11" viewBox="0 0 11 11"><rect x="0.5" y="0.5" width="10" height="10" rx="1.5" fill="none" stroke="#777" stroke-width="1"/><path d="M2.5,5.5 L8.5,5.5 M5.5,2.5 L5.5,8.5" stroke="#777" stroke-width="1"/></svg>
<div class="t m" style="left:22.5px;top:150.09px;font-size:12.8px"><span style="color:#444444">2020-04-15 19:54:05.000</span></div>
<div class="t m" style="left:205px;top:150.09px;font-size:12.8px"><span style="color:#3d8a3d">{</span><span style="color:#1e1e1e"> </span><span style="color:#4a7fa6">rails</span><span style="color:#3d8a3d">:</span><span style="color:#1e1e1e"> </span><span style="color:#3d8a3d">{</span><span style="color:#1e1e1e"> </span><span style="color:#4a7fa6">process</span><span style="color:#3d8a3d">:</span><span style="color:#1e1e1e"> </span><span style="color:#1e1e1e">&quot;HotelsController&quot;</span><span style="color:#3d8a3d">,</span><span style="color:#1e1e1e"> </span><span style="color:#4a7fa6">pidOrMethod</span><span style="color:#3d8a3d">:</span><span style="color:#1e1e1e"> </span><span style="color:#1e1e1e">&quot;show&quot;</span><span style="color:#3d8a3d">,</span><span style="color:#1e1e1e"> </span><span style="color:#4a7fa6">outputFormat</span><span style="color:#3d8a3d">:</span><span style="color:#1e1e1e"> </span><span style="color:#1e1e1e">&quot;*/*&quot;</span><span style="color:#1e1e1e"> </span><span style="color:#3d8a3d">}</span><span style="color:#3d8a3d">,</span><span style="color:#1e1e1e"> </span><span style="color:#4a7fa6">syslog</span><span style="color:#3d8a3d">:</span><span style="color:#1e1e1e"> </span><span style="color:#3d8a3d">{</span></div>
<div class="t m" style="left:205px;top:167.09px;font-size:12.8px"><span style="color:#4a7fa6">severity</span><span style="color:#3d8a3d">:</span><span style="color:#1e1e1e"> </span><span style="color:#1e1e1e">&quot;Informational&quot;</span><span style="color:#3d8a3d">,</span><span style="color:#1e1e1e"> </span><span style="color:#4a7fa6">appName</span><span style="color:#3d8a3d">:</span><span style="color:#1e1e1e"> </span><span style="color:#1e1e1e">&quot;web-tier&quot;</span><span style="color:#3d8a3d">,</span><span style="color:#1e1e1e"> </span><span style="color:#4a7fa6">host</span><span style="color:#3d8a3d">:</span><span style="color:#1e1e1e"> </span><span style="color:#1e1e1e">&quot;web-tier-1&quot;</span><span style="color:#3d8a3d">,</span><span style="color:#1e1e1e"> </span><span style="color:#4a7fa6">pid</span><span style="color:#3d8a3d">:</span><span style="color:#1e1e1e"> </span><span style="color:#1f33d8">1936</span><span style="color:#3d8a3d">,</span><span style="color:#1e1e1e"> </span><span style="color:#4a7fa6">priority</span><span style="color:#3d8a3d">:</span><span style="color:#1e1e1e"> </span><span style="color:#1e1e1e">&quot;14&quot;</span><span style="color:#3d8a3d">,</span></div>
<div class="t m" style="left:205px;top:184.09px;font-size:12.8px"><span style="color:#4a7fa6">facility</span><span style="color:#3d8a3d">:</span><span style="color:#1e1e1e"> </span><span style="color:#1e1e1e">&quot;user-level messages&quot;</span><span style="color:#3d8a3d">,</span><span style="color:#1e1e1e"> </span><span style="color:#4a7fa6">timestamp</span><span style="color:#3d8a3d">:</span><span style="color:#1e1e1e"> </span><span style="color:#1e1e1e">&quot;2020-04-16T00:54:05Z&quot;</span><span style="color:#1e1e1e"> </span><span style="color:#3d8a3d">}</span><span style="color:#3d8a3d">,</span><span style="color:#1e1e1e"> </span><span style="color:#4a7fa6">derived</span><span style="color:#3d8a3d">:</span><span style="color:#1e1e1e"> </span><span style="color:#3d8a3d">{</span><span style="color:#1e1e1e"> </span><span style="color:#4a7fa6">Hour</span><span style="color:#3d8a3d">:</span><span style="color:#1e1e1e"> </span><span style="color:#1f33d8">0</span><span style="color:#1e1e1e"> </span><span style="color:#3d8a3d">}</span><span style="color:#1e1e1e"> </span><span style="color:#3d8a3d">}</span></div>
<div class="a" style="left:0px;top:200px;width:1013px;height:121px;background:#ffffff;"></div>
<svg class="a" style="left:7px;top:212.70000000000005px" width="11" height="11" viewBox="0 0 11 11"><rect x="0.5" y="0.5" width="10" height="10" rx="1.5" fill="none" stroke="#777" stroke-width="1"/><path d="M2.5,5.5 L8.5,5.5 M5.5,2.5 L5.5,8.5" stroke="#777" stroke-width="1"/></svg>
<div class="t m" style="left:22.5px;top:219.29px;font-size:12.8px"><span style="color:#444444">2020-04-15 19:54:05.000</span></div>
<div class="t m" style="left:205px;top:219.29px;font-size:12.8px"><span style="color:#444444">Started GET &quot;/hotels/5c37da50e4b0ec8a5bae1ee1?from_date=2020-08-25&amp;to_date=2020-10-26&quot; for</span></div>
<div class="t m" style="left:205px;top:236.29px;font-size:12.8px"><span style="color:#444444">54.224.192.84 at 2020-04-16 00:54:05 +0000</span></div>
<div class="t m" style="left:205px;top:253.29px;font-size:12.8px"><span style="color:#3d8a3d">{</span><span style="color:#1e1e1e"> </span><span style="color:#4a7fa6">syslog</span><span style="color:#3d8a3d">:</span><span style="color:#1e1e1e"> </span><span style="color:#3d8a3d">{</span><span style="color:#1e1e1e"> </span><span style="color:#4a7fa6">severity</span><span style="color:#3d8a3d">:</span><span style="color:#1e1e1e"> </span><span style="color:#1e1e1e">&quot;Informational&quot;</span><span style="color:#3d8a3d">,</span><span style="color:#1e1e1e"> </span><span style="color:#4a7fa6">appName</span><span style="color:#3d8a3d">:</span><span style="color:#1e1e1e"> </span><span style="color:#1e1e1e">&quot;web-tier&quot;</span><span style="color:#3d8a3d">,</span><span style="color:#1e1e1e"> </span><span style="color:#4a7fa6">host</span><span style="color:#3d8a3d">:</span><span style="color:#1e1e1e"> </span><span style="color:#1e1e1e">&quot;web-tier-1&quot;</span><span style="color:#3d8a3d">,</span><span style="color:#1e1e1e"> </span><span style="color:#4a7fa6">pid</span><span style="color:#3d8a3d">:</span><span style="color:#1e1e1e"> </span><span style="color:#1f33d8">1936</span><span style="color:#3d8a3d">,</span><span style="color:#1e1e1e"> </span><span style="color:#4a7fa6">priority</span><span style="color:#3d8a3d">:</span></div>
<div class="t m" style="left:205px;top:270.29px;font-size:12.8px"><span style="color:#1e1e1e">&quot;14&quot;</span><span style="color:#3d8a3d">,</span><span style="color:#1e1e1e"> </span><span style="color:#4a7fa6">facility</span><span style="color:#3d8a3d">:</span><span style="color:#1e1e1e"> </span><span style="color:#1e1e1e">&quot;user-level messages&quot;</span><span style="color:#3d8a3d">,</span><span style="color:#1e1e1e"> </span><span style="color:#4a7fa6">timestamp</span><span style="color:#3d8a3d">:</span><span style="color:#1e1e1e"> </span><span style="color:#1e1e1e">&quot;2020-04-16T00:54:05Z&quot;</span><span style="color:#1e1e1e"> </span><span style="color:#3d8a3d">}</span><span style="color:#3d8a3d">,</span><span style="color:#1e1e1e"> </span><span style="color:#4a7fa6">derived</span><span style="color:#3d8a3d">:</span><span style="color:#1e1e1e"> </span><span style="color:#3d8a3d">{</span><span style="color:#1e1e1e"> </span><span style="color:#4a7fa6">Hour</span><span style="color:#3d8a3d">:</span><span style="color:#1e1e1e"> </span><span style="color:#1f33d8">0</span><span style="color:#3d8a3d">,</span></div>
<div class="t m" style="left:205px;top:287.29px;font-size:12.8px"><span style="color:#4a7fa6">Field-01</span><span style="color:#3d8a3d">:</span><span style="color:#1e1e1e"> "GET "/hotels/5c37da50e4b0ec8a5bae1ee1?from_date=2020-08-25&amp;to_date=2020-10-26" for</span></div>
<div class="t m" style="left:205px;top:304.29px;font-size:12.8px"><span style="color:#1e1e1e">54.224.192.84 at 2020-04-16 00:54:05 +0000"</span><span style="color:#3d8a3d"> } }</span></div>
<div class="a" style="left:0px;top:321px;width:1013px;height:20px;background:#f2f2f2;"></div>
<svg class="a" style="left:7px;top:332px" width="11" height="11" viewBox="0 0 11 11"><rect x="0.5" y="0.5" width="10" height="10" rx="1.5" fill="none" stroke="#777" stroke-width="1"/><path d="M2.5,5.5 L8.5,5.5 M5.5,2.5 L5.5,8.5" stroke="#777" stroke-width="1"/></svg>
<div class="t m" style="left:22.5px;top:338.59px;font-size:12.8px"><span style="color:#444444">2020-04-15 19:54:05.000</span></div>
<div class="t m" style="left:205px;top:338.59px;font-size:12.8px"><span style="color:#3d8a3d">{</span><span style="color:#1e1e1e"> </span><span style="color:#4a7fa6">apache</span><span style="color:#3d8a3d">:</span><span style="color:#1e1e1e"> </span><span style="color:#3d8a3d">{</span><span style="color:#1e1e1e"> </span><span style="color:#4a7fa6">clientIp</span><span style="color:#3d8a3d">:</span><span style="color:#1e1e1e"> </span><span style="color:#1e1e1e">&quot;54.224.192.84&quot;</span><span style="color:#3d8a3d">,</span><span style="color:#1e1e1e"> </span><span style="color:#4a7fa6">pid</span><span style="color:#3d8a3d">:</span><span style="color:#1e1e1e"> </span><span style="color:#1f33d8">7410</span><span style="color:#3d8a3d">,</span><span style="color:#1e1e1e"> </span><span style="color:#4a7fa6">requestMethod</span><span style="color:#3d8a3d">:</span><span style="color:#1e1e1e"> </span><span style="color:#1e1e1e">&quot;GET&quot;</span><span style="color:#3d8a3d">,</span><span style="color:#1e1e1e"> </span><span style="color:#4a7fa6">requestURI</span><span style="color:#3d8a3d">:</span><span style="color:#1e1e1e"> </span><span style="color:#1e1e1e">&quot;/hotels/5c37&quot;</span><span style="color:#3d8a3d">,</span></div>
</div>
<div class="a" style="left:1523px;top:466px;width:13px;height:334px;background:#f1f1f1;"></div>
<svg class="a" style="left:1524px;top:471px;" width="11" height="26" viewBox="0 0 11 26"><path d="M1,7 L5.5,2 L10,7 Z" fill="#c2c2c2"/><path d="M1,18 L5.5,23 L10,18 Z" fill="#c2c2c2"/></svg>
<div class="a" style="left:1524px;top:676px;width:12px;height:16px;background:#c9ccd2;border-radius:4px 0 0 4px"></div>
<div class="a" style="left:1261px;top:396px;width:170px;height:24px;background:#1a1a1a;border-radius:4px"></div>
<svg class="a" style="left:1340px;top:419px;" width="14" height="7" viewBox="0 0 14 7"><path d="M0,0 L14,0 L7,6.5 Z" fill="#1a1a1a"/></svg>
<div class="t" style="left:1269px;top:408.05px;font-size:12.85px;color:#ffffff;font-weight:400;font-style:normal;">Scroll to Surrounded Event</div></body></html>
